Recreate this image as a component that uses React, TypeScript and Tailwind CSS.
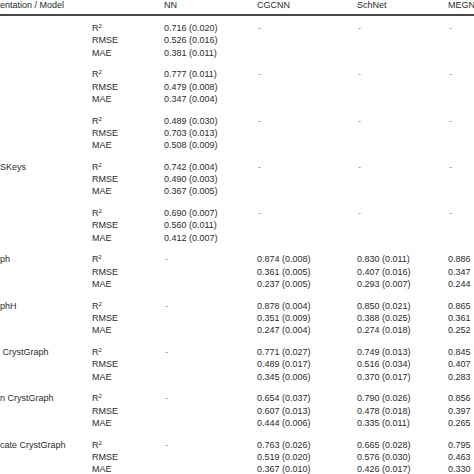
import React from "react";

type Cell = string[] | null; // three values or a dash

interface Group {
  label: string;
  nn: Cell;
  cgcnn: Cell;
  schnet: Cell;
  megnet: Cell;
}

const groups: Group[] = [
  { label: "", nn: ["0.716 (0.020)", "0.526 (0.016)", "0.381 (0.011)"], cgcnn: null, schnet: null, megnet: null },
  { label: "", nn: ["0.777 (0.011)", "0.479 (0.008)", "0.347 (0.004)"], cgcnn: null, schnet: null, megnet: null },
  { label: "", nn: ["0.489 (0.030)", "0.703 (0.013)", "0.508 (0.009)"], cgcnn: null, schnet: null, megnet: null },
  { label: "SKeys", nn: ["0.742 (0.004)", "0.490 (0.003)", "0.367 (0.005)"], cgcnn: null, schnet: null, megnet: null },
  { label: "", nn: ["0.690 (0.007)", "0.560 (0.011)", "0.412 (0.007)"], cgcnn: null, schnet: null, megnet: null },
  {
    label: "ph",
    nn: null,
    cgcnn: ["0.874 (0.008)", "0.361 (0.005)", "0.237 (0.005)"],
    schnet: ["0.830 (0.011)", "0.407 (0.016)", "0.293 (0.007)"],
    megnet: ["0.886", "0.347", "0.244"],
  },
  {
    label: "phH",
    nn: null,
    cgcnn: ["0.878 (0.004)", "0.351 (0.009)", "0.247 (0.004)"],
    schnet: ["0.850 (0.021)", "0.388 (0.025)", "0.274 (0.018)"],
    megnet: ["0.865", "0.361", "0.252"],
  },
  {
    label: "\u00a0CrystGraph",
    nn: null,
    cgcnn: ["0.771 (0.027)", "0.489 (0.017)", "0.345 (0.006)"],
    schnet: ["0.749 (0.013)", "0.516 (0.034)", "0.370 (0.017)"],
    megnet: ["0.845", "0.407", "0.283"],
  },
  {
    label: "n CrystGraph",
    nn: null,
    cgcnn: ["0.654 (0.037)", "0.607 (0.013)", "0.444 (0.006)"],
    schnet: ["0.790 (0.026)", "0.478 (0.018)", "0.335 (0.011)"],
    megnet: ["0.856", "0.397", "0.265"],
  },
  {
    label: "cate CrystGraph",
    nn: null,
    cgcnn: ["0.763 (0.026)", "0.519 (0.020)", "0.367 (0.010)"],
    schnet: ["0.665 (0.028)", "0.576 (0.030)", "0.426 (0.017)"],
    megnet: ["0.795", "0.463", "0.330"],
  },
];

const metrics = ["R2", "RMSE", "MAE"];

function Metric({ name }: { name: string }) {
  if (name === "R2") {
    return (
      <span>
        R<span className="relative top-[-3px] text-[6px] leading-none">2</span>
      </span>
    );
  }
  return <span>{name}</span>;
}

function value(cell: Cell, row: number) {
  if (!cell) return row === 0 ? <span className="text-[#8a8a8a] pl-[1px]">-</span> : null;
  return cell[row];
}

export default function App() {
  return (
    <div className="w-[474px] h-[474px] overflow-hidden bg-white font-['Liberation_Sans',Arial,sans-serif] text-[9px] text-[#2b2b2b] whitespace-nowrap">
      {/* header */}
      <div className="grid grid-cols-[92px_72px_93px_100px_91px_26px] h-[16px] border-b-2 border-[#4a4a4a] leading-[10px]">
        <div className="overflow-hidden col-span-2">entation / Model</div>
        <div>NN</div>
        <div>CGCNN</div>
        <div>SchNet</div>
        <div className="overflow-hidden">MEGNet</div>
      </div>

      {/* body */}
      <div className="flex flex-col gap-[9.4px] pt-[6px]">
        {groups.map((g, gi) => (
          <div key={gi} className="flex flex-col">
            {metrics.map((m, ri) => (
              <div
                key={m}
                className="grid grid-cols-[92px_72px_93px_100px_91px_26px] h-[12.3px] leading-[12.3px]"
              >
                <div className="overflow-hidden">{ri === 0 ? g.label : ""}</div>
                <div>
                  <Metric name={m} />
                </div>
                <div>{value(g.nn, ri)}</div>
                <div>{value(g.cgcnn, ri)}</div>
                <div>{value(g.schnet, ri)}</div>
                <div className="overflow-hidden">{value(g.megnet, ri)}</div>
              </div>
            ))}
          </div>
        ))}
      </div>
    </div>
  );
}
